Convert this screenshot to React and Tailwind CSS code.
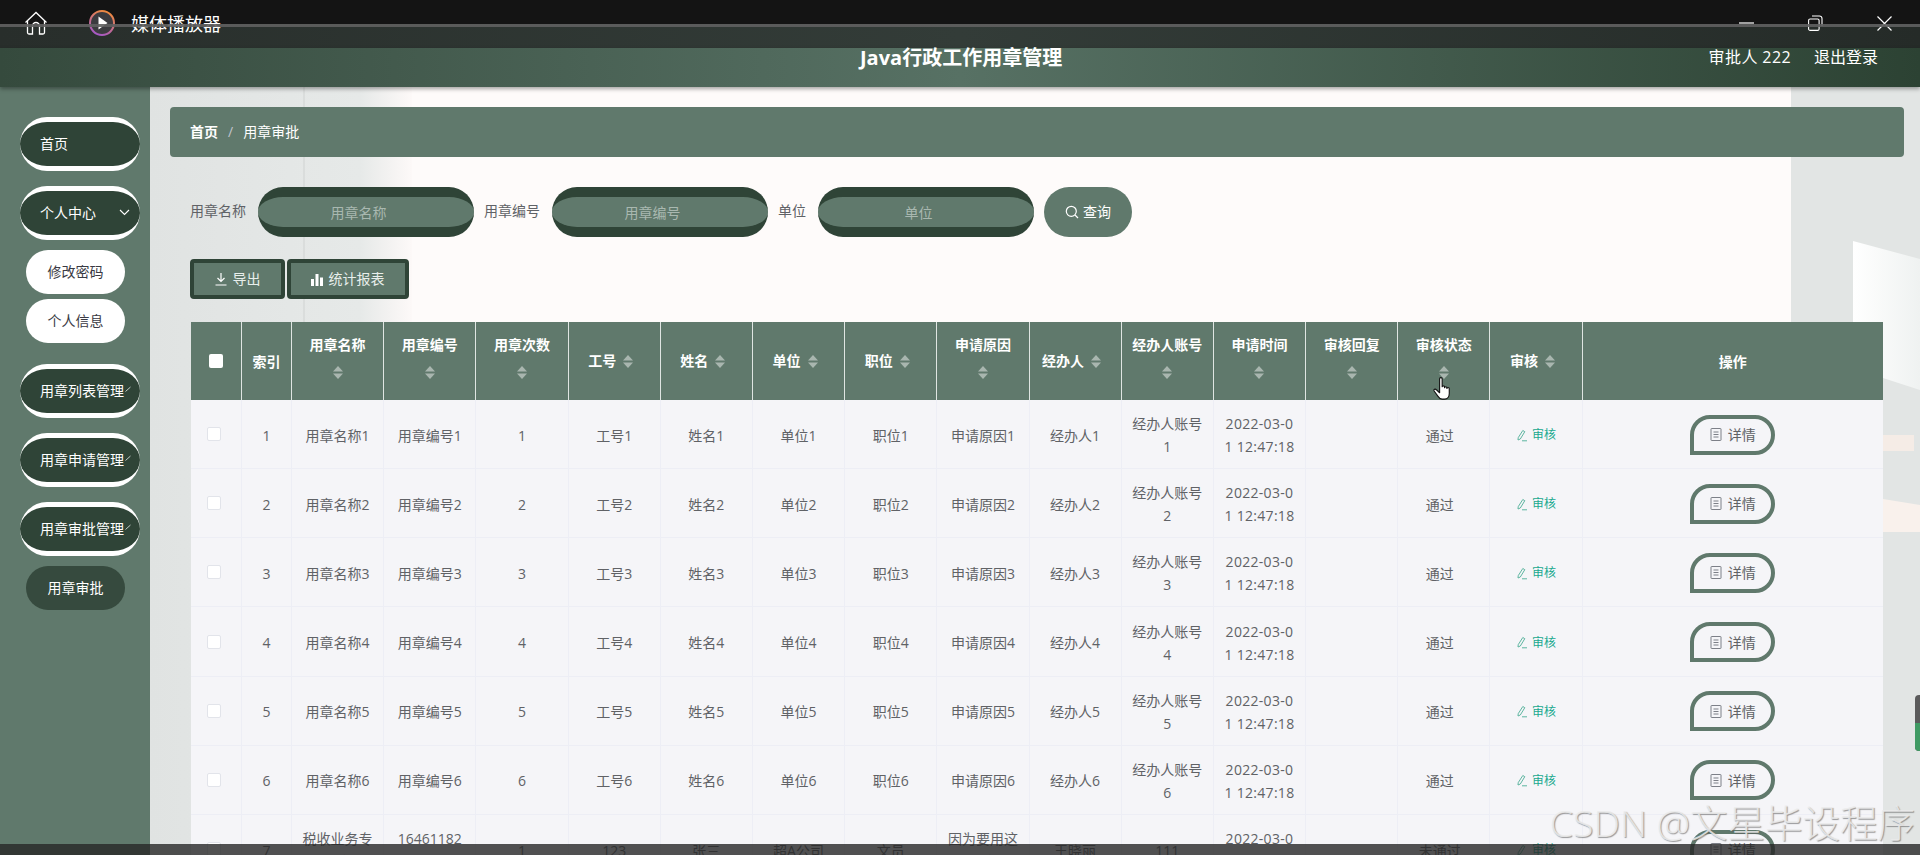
import React from "react";

const FONT = "[font-family:'Open_Sans','Noto_Sans_CJK_SC',sans-serif]";

function Caret() {
  return (
    <span className="inline-flex h-[32px] w-6 shrink-0 items-center justify-center">
      <svg width="10" height="13" viewBox="0 0 10 13" fill="#a9b6af">
        <path d="M5 0 10 5.500H0z" />
        <path d="M0 7.500H10L5 13z" />
      </svg>
    </span>
  );
}

function SideButton({ children, arrow }) {
  return (
    <div className="relative mx-5 flex h-[54px] w-[120px] items-center rounded-[27px] border-y-[5px] border-white bg-[#2f4437] pb-[1px] pl-5 text-sm text-white whitespace-nowrap">
      {children}
      {arrow === "full" && (
        <svg className="absolute left-[99px] top-[18px]" width="11" height="7" viewBox="0 0 11 7" fill="none" stroke="#fff" strokeWidth="1.100">
          <path d="M1 1l4.500 4.500L10 1" />
        </svg>
      )}
      {arrow === "cut" && (
        <svg className="absolute left-[105px] top-[17px]" width="6" height="7" viewBox="0 0 6 7" fill="none" stroke="#e8eeeb" strokeWidth="0.800">
          <path d="M.5 5.500 5.500 1" />
        </svg>
      )}
    </div>
  );
}

function SubButton({ children, active }) {
  return (
    <div
      className={`ml-[26px] flex h-[44px] w-[99px] items-center justify-center rounded-[22px] pb-[1px] text-sm ${
        active ? "bg-[#364a3e] text-white" : "bg-white text-[#3a3a44]"
      }`}
    >
      {children}
    </div>
  );
}

function SearchField({ label }) {
  return (
    <div className="flex items-center gap-3">
      <span className="pb-[2px] text-sm text-[#606266]">{label}</span>
      <input
        readOnly
        placeholder={label}
        className="h-[50px] w-[216px] rounded-[25px] border-y-[10px] border-[#2f4437] bg-[#60796c] pl-[15px] pr-[30px] text-center text-sm outline-none placeholder:text-[#a9b8b0]"
      />
    </div>
  );
}

function ToolButton({ icon, children, className }) {
  return (
    <div className={`flex h-10 items-center justify-center gap-1.5 rounded border-4 border-[#2f4437] bg-[#60796c] text-sm text-[#e8eeeb] ${className}`}>
      {icon}
      {children}
    </div>
  );
}

function PencilIcon() {
  return (
    <svg width="12" height="13" viewBox="0 0 12 13" fill="none" stroke="#5db5a0" strokeWidth="1">
      <path d="M6.800 1.500 8.800 2.700 4.300 10 2 11 2.200 8.700z" />
      <path d="M6 11.800h5" />
    </svg>
  );
}

function DocIcon() {
  return (
    <svg width="12" height="13" viewBox="0 0 12 13" fill="none" stroke="#7d8088" strokeWidth="1">
      <rect x="1" y=".5" width="10" height="12" rx=".5" />
      <path d="M3.500 4h5M3.500 6.500h5M3.500 9h5" />
    </svg>
  );
}

const headers = [
  "用章名称", "用章编号", "用章次数", "工号", "姓名", "单位", "职位",
  "申请原因", "经办人", "经办人账号", "申请时间", "审核回复", "审核状态", "审核",
];

const rows = [1, 2, 3, 4, 5, 6].map((n) => ({
  n,
  cells: [
    `用章名称${n}`, `用章编号${n}`, `${n}`, `工号${n}`, `姓名${n}`, `单位${n}`, `职位${n}`,
    `申请原因${n}`, `经办人${n}`, `经办人账号${n}`, "2022-03-01 12:47:18", "", "通过",
  ],
}));
rows.push({
  n: 7,
  cells: [
    "税收业务专用章", "1646118238193", "1", "123", "张三", "超A公司", "文员",
    "因为要用这个章", "王晓丽", "111", "2022-03-01 12:47:18", "", "未通过",
  ],
});

function Table() {
  const th = "border-r border-[#dfe5e2] p-0 align-middle";
  const td = "border-r border-b border-[#edeef5] px-2.5 pb-0 pt-[2px] text-center align-middle break-all";
  const dateTd = "border-r border-b border-[#edeef5] px-[9px] pb-0 pt-[2px] text-center align-middle break-all tracking-[0.3px]";
  const statusTd = "border-r border-b border-[#edeef5] pl-[2px] pr-[10px] pb-0 pt-[2px] text-center align-middle break-all";
  return (
    <table className="ml-[41px] mt-[23px] w-[1692px] table-fixed border-separate border-spacing-0 text-sm leading-[23px]">
      <colgroup>
        <col className="w-[51px]" />
        <col className="w-[50px]" />
        {headers.map((h) => (
          <col key={h} className="w-[92.200px]" />
        ))}
        <col />
      </colgroup>
      <thead>
        <tr className="h-[78px] bg-[#60796c] font-bold text-white">
          <th className={th}>
            <span className="inline-block h-[14px] w-[14px] translate-y-[1px] rounded-[2px] bg-white" />
          </th>
          <th className={th}>索引</th>
          {headers.map((h) => (
            <th key={h} className={th}>
              <div className="flex flex-wrap items-center justify-center px-2.5">
                <span className="-translate-y-[1px]">{h}</span>
                <Caret />
              </div>
            </th>
          ))}
          <th className="p-0 align-middle">操作</th>
        </tr>
      </thead>
      <tbody className="bg-[#f5f5f8] text-[#606266]">
        {rows.map((r) => (
          <tr key={r.n} className="h-[69.170px]">
            <td className="border-r border-b border-[#edeef5] p-0 align-middle">
              <span className="ml-4 block h-[14px] w-[14px] rounded-[2px] border border-[#e2e4ea] bg-white" />
            </td>
            <td className={td}>{r.n}</td>
            {r.cells.map((c, i) => (
              <td key={i} className={i === 10 ? dateTd : i === 12 ? statusTd : td}>{c}</td>
            ))}
            <td className={td}>
              <div className="flex items-center justify-center gap-1 text-xs text-[#20a98f]">
                <PencilIcon />
                审核
              </div>
            </td>
            <td className="border-b border-[#edeef5] p-0 pt-[1px] align-middle">
              <div className="mx-auto flex h-10 w-[85px] items-center justify-center gap-1.5 rounded-[20px] rounded-bl-none border-4 border-[#60796c] text-[#606266]">
                <DocIcon />
                详情
              </div>
            </td>
          </tr>
        ))}
      </tbody>
    </table>
  );
}

export default function App() {
  return (
    <div className={`relative h-[855px] overflow-hidden bg-[#fefbfa] ${FONT}`}>
      {/* window title bar */}
      <div className="relative h-12 bg-[linear-gradient(90deg,#282e2b,#333c38_50%,#252b28)]">
        <div className="h-6 bg-[#141414]" />
        <div className="absolute inset-x-0 top-0 flex h-[46px] items-center text-white">
          <svg className="ml-[24px]" width="24" height="24" viewBox="0 0 24 24" fill="none" stroke="#fff" strokeWidth="1.300">
            <path d="M1.500 11.500 12 1.500l10.500 10" />
            <path d="M3.500 10v11.500a1.500 1.500 0 0 0 1.500 1.500h3.500V15a3.500 3.500 0 0 1 7 0v8H19a1.500 1.500 0 0 0 1.500-1.500V10" />
          </svg>
          <svg className="ml-[41px]" width="26" height="26" viewBox="0 0 26 26">
            <defs>
              <linearGradient id="ring" x1="0.700" y1="0" x2="0.300" y2="1">
                <stop offset="0" stopColor="#f08a3c" />
                <stop offset="1" stopColor="#a457c8" />
              </linearGradient>
            </defs>
            <circle cx="13" cy="13" r="12" fill="#3b3b3f" stroke="url(#ring)" strokeWidth="2" />
            <path d="M9.500 6.500 18.500 13l-9 6.500z" fill="#fff" />
          </svg>
          <span className="ml-[16px] translate-y-[1px] text-lg">媒体播放器</span>
          <svg className="ml-auto" width="15" height="2" viewBox="0 0 15 2"><path d="M0 1h15" stroke="#fff" strokeWidth="1.200" /></svg>
          <svg className="ml-[54px]" width="15" height="16" viewBox="0 0 15 16" fill="none" stroke="#fff" strokeWidth="1.100">
            <rect x=".6" y="4" width="10.500" height="11.400" rx="1.500" />
            <path d="M4 1h7.500A2.500 2.500 0 0 1 14 3.500V11" />
          </svg>
          <svg className="ml-[54px] mr-[28px]" width="15" height="15" viewBox="0 0 15 15" fill="none" stroke="#fff" strokeWidth="1.200">
            <path d="M.5.500l14 14M14.500.500l-14 14" />
          </svg>
        </div>
        <div className="absolute inset-x-0 top-6 h-[3px] bg-[#5f5f5f]/90" />
      </div>

      {/* system header */}
      <header className="relative z-10 flex h-[39px] bg-[linear-gradient(90deg,#354a3d,#577164_50%,#2c4233)] text-white shadow-[0_2px_4px_rgba(0,0,0,0.35)]">
        <h1 className="absolute left-[860px] top-[-1px] text-xl font-bold leading-[22px]">Java行政工作用章管理</h1>
        <div className="ml-auto mr-[42px] mt-[-2px] flex gap-[23px] text-base leading-[22px]">
          <span className="tracking-[0.4px]">审批人 222</span>
          <span>退出登录</span>
        </div>
      </header>

      <div className="flex h-[768px]">
        {/* sidebar */}
        <aside className="flex w-[150px] shrink-0 flex-col bg-[#60796c] pt-[30px]">
          <SideButton>首页</SideButton>
          <div className="mt-[15px]"><SideButton arrow="full">个人中心</SideButton></div>
          <div className="mt-2.5"><SubButton>修改密码</SubButton></div>
          <div className="mt-[5px]"><SubButton>个人信息</SubButton></div>
          <div className="mt-[21px]"><SideButton arrow="cut">用章列表管理</SideButton></div>
          <div className="mt-[15px]"><SideButton arrow="cut">用章申请管理</SideButton></div>
          <div className="mt-[15px]"><SideButton arrow="cut">用章审批管理</SideButton></div>
          <div className="mt-2.5"><SubButton active>用章审批</SubButton></div>
        </aside>

        {/* content */}
        <main className="relative min-w-0 flex-1">
          <svg className="absolute inset-0 h-full w-full" viewBox="150 87 1770 768" preserveAspectRatio="none">
            <defs>
              <linearGradient id="left" x1="0" x2="1" y1="0" y2="0">
                <stop offset="0" stopColor="#e0e3e2" />
                <stop offset="0.800" stopColor="#e6e9e8" />
                <stop offset="1" stopColor="#fdf9f8" />
              </linearGradient>
              <linearGradient id="pane" x1="0" x2="1" y1="0" y2="0">
                <stop offset="0" stopColor="#ffffff" />
                <stop offset="1" stopColor="#eff2f1" />
              </linearGradient>
            </defs>
            <rect x="150" y="87" width="262" height="768" fill="url(#left)" />
            <rect x="303" y="87" width="2" height="768" fill="#dadddc" />
            <rect x="1791" y="87" width="129" height="768" fill="#e2e5e4" />
            <polygon points="1853,241 1920,259 1920,390 1883,378 1853,370" fill="url(#pane)" />
            <rect x="1883" y="435" width="31" height="16" fill="#f5ece6" />
            <polygon points="1883,499 1920,505 1920,532 1883,532" fill="#f9f1ec" />
          </svg>

          <div className="relative">
            <nav className="ml-5 mr-4 mt-5 flex h-[50px] items-center rounded bg-[#60796c] pb-[1px] pl-5 text-sm text-white">
              <span className="font-bold">首页</span>
              <span className="mx-[10px] text-[#c0c4cc]">/</span>
              <span>用章审批</span>
            </nav>

            <div className="ml-10 mt-[30px] flex items-center gap-2.5">
              <SearchField label="用章名称" />
              <SearchField label="用章编号" />
              <SearchField label="单位" />
              <div className="flex h-[50px] w-[88px] items-center justify-center gap-1 rounded-[25px] bg-[#60796c] text-sm text-white">
                <svg width="14" height="14" viewBox="0 0 14 14" fill="none" stroke="#fff" strokeWidth="1.200">
                  <circle cx="6.300" cy="6.300" r="5" />
                  <path d="M10 10l3 3" />
                </svg>
                查询
              </div>
            </div>

            <div className="ml-10 mt-[22px] flex gap-[1.500px]">
              <ToolButton
                className="w-[95px]"
                icon={
                  <svg width="12" height="13" viewBox="0 0 12 13" fill="none" stroke="#fff" strokeWidth="1.200">
                    <path d="M6 0v8M2.500 5 6 8.500 9.500 5M.5 12h11" />
                  </svg>
                }
              >
                导出
              </ToolButton>
              <ToolButton
                className="w-[122px]"
                icon={
                  <svg width="12" height="13" viewBox="0 0 12 13" fill="#fff">
                    <path d="M0 6h3v7H0zM4.500 1h3v12h-3zM9 4.500h3V13H9z" />
                  </svg>
                }
              >
                统计报表
              </ToolButton>
            </div>

            <Table />
          </div>
        </main>
      </div>

      {/* screen-recording overlays */}
      <svg className="absolute left-[1432px] top-[376px]" width="22" height="25" viewBox="0 0 26 28" fill="#fff" stroke="#111" strokeWidth="1.300" strokeLinejoin="round">
        <path d="M9 2.500c0-1.800 3-1.800 3 0V12c0-1.500 2.800-1.500 2.800 0v1c0-1.500 2.800-1.500 2.800 0v1c0-1.500 2.800-1.500 2.800 0v6c0 3.500-2 6.500-5.500 6.500h-3c-2.500 0-3.500-1-5-3.500L2.500 17c-1-1.700 1.200-3.200 2.700-1.500L9 19z" />
      </svg>

      <div className="absolute right-[5px] top-[795px] whitespace-nowrap text-[37.500px] font-light leading-[56px] text-[#ececec]/85 [text-shadow:1px_1px_1px_rgba(90,90,90,0.6)]">
        CSDN @文星毕设程序
      </div>

      <div className="absolute left-[1915px] top-[695px] h-[56px] w-[5px] overflow-hidden rounded-l bg-[#5b5b5b]">
        <div className="mt-[28px] h-[28px] bg-[#3f9a63]" />
      </div>

      <div className="absolute inset-x-0 bottom-0 h-[11px] bg-[rgba(39,39,39,0.8)]" />
    </div>
  );
}
